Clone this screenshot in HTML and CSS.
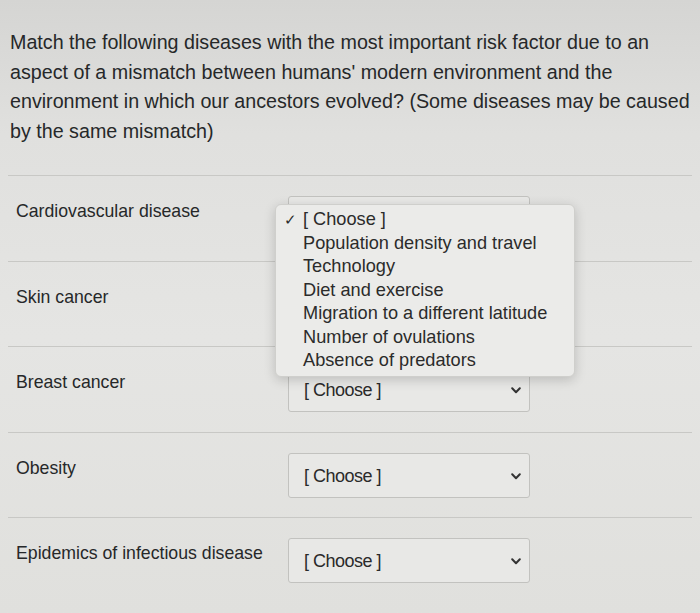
FILE: index.html
```html
<!DOCTYPE html>
<html lang="en">
<head>
<meta charset="utf-8">
<title>Matching question</title>
<link rel="stylesheet" href="styles.css">
</head>
<body>
<div class="page">
  <p class="question">Match the following diseases with the most important risk factor due to an aspect of a mismatch between humans' modern environment and the environment in which our ancestors evolved? (Some diseases may be caused by the same mismatch)</p>

  <div class="rows">
    <div class="row">
      <div class="label">Cardiovascular disease</div>
      <div class="select-wrap">
        <div class="select"><span class="value">[ Choose ]</span>
          <svg class="chev" width="10" height="7" viewBox="0 0 10 7"><path d="M1.2 1.3 L5 5.2 L8.8 1.3" fill="none" stroke="#333" stroke-width="2" stroke-linecap="round" stroke-linejoin="round"/></svg>
        </div>
        <ul class="menu">
          <li class="checked"><span class="check">✓</span>[ Choose ]</li>
          <li>Population density and travel</li>
          <li>Technology</li>
          <li>Diet and exercise</li>
          <li>Migration to a different latitude</li>
          <li>Number of ovulations</li>
          <li>Absence of predators</li>
        </ul>
      </div>
    </div>
    <div class="row">
      <div class="label">Skin cancer</div>
      <div class="select-wrap">
        <div class="select"><span class="value">[ Choose ]</span>
          <svg class="chev" width="10" height="7" viewBox="0 0 10 7"><path d="M1.2 1.3 L5 5.2 L8.8 1.3" fill="none" stroke="#333" stroke-width="2" stroke-linecap="round" stroke-linejoin="round"/></svg>
        </div>
      </div>
    </div>
    <div class="row">
      <div class="label">Breast cancer</div>
      <div class="select-wrap">
        <div class="select"><span class="value">[ Choose ]</span>
          <svg class="chev" width="10" height="7" viewBox="0 0 10 7"><path d="M1.2 1.3 L5 5.2 L8.8 1.3" fill="none" stroke="#333" stroke-width="2" stroke-linecap="round" stroke-linejoin="round"/></svg>
        </div>
      </div>
    </div>
    <div class="row">
      <div class="label">Obesity</div>
      <div class="select-wrap">
        <div class="select"><span class="value">[ Choose ]</span>
          <svg class="chev" width="10" height="7" viewBox="0 0 10 7"><path d="M1.2 1.3 L5 5.2 L8.8 1.3" fill="none" stroke="#333" stroke-width="2" stroke-linecap="round" stroke-linejoin="round"/></svg>
        </div>
      </div>
    </div>
    <div class="row">
      <div class="label">Epidemics of infectious disease</div>
      <div class="select-wrap">
        <div class="select"><span class="value">[ Choose ]</span>
          <svg class="chev" width="10" height="7" viewBox="0 0 10 7"><path d="M1.2 1.3 L5 5.2 L8.8 1.3" fill="none" stroke="#333" stroke-width="2" stroke-linecap="round" stroke-linejoin="round"/></svg>
        </div>
      </div>
    </div>
  </div>
</div>
</body>
</html>
```
FILE: styles.css
```css
html, body {
  margin: 0;
  padding: 0;
}
body {
  width: 700px;
  height: 613px;
  overflow: hidden;
  background: linear-gradient(180deg, #d5d5d3 0%, #e0e0de 22%, #e5e5e3 55%, #e0e0dd 100%);
  font-family: "Liberation Sans", Arial, sans-serif;
  color: #262829;
}
.page {
  padding: 28px 8px 0 8px;
}
.question {
  margin: 0 -7px 29px 0;
  padding-left: 2px;
  font-size: 19.7px;
  line-height: 29.5px;
}
.rows {
  display: flex;
  flex-direction: column;
}
.row {
  display: flex;
  align-items: flex-start;
  border-top: 1px solid #c8c8c5;
  padding: 20px 0 19.5px 8px;
}
.label {
  width: 272px;
  font-size: 17.7px;
  line-height: 20px;
  padding-top: 5px;
}
.select-wrap {
  position: relative;
}
.select {
  box-sizing: border-box;
  width: 242px;
  height: 45px;
  border: 1px solid #c2c2bf;
  border-radius: 3px;
  background: #e8e8e6;
  display: flex;
  align-items: center;
  justify-content: space-between;
  padding: 2px 8px 0 15px;
  font-size: 18px;
  letter-spacing: -0.5px;
}
.value {
  color: #2a2a2a;
}
.chev {
  display: block;
}
.menu {
  position: absolute;
  left: -13px;
  top: 8px;
  box-sizing: border-box;
  width: 300px;
  height: 173px;
  margin: 0;
  padding: 3px 0 0 27px;
  list-style: none;
  background: #ebebe9;
  border: 1px solid #cfcfcc;
  border-radius: 6px;
  box-shadow: 0 3px 12px rgba(0, 0, 0, 0.18);
  font-size: 18.2px;
  z-index: 2;
}
.menu li {
  position: relative;
  line-height: 23.5px;
  color: #2b2b2b;
  white-space: nowrap;
}
.check {
  position: absolute;
  left: -19px;
  font-size: 15px;
}
```
